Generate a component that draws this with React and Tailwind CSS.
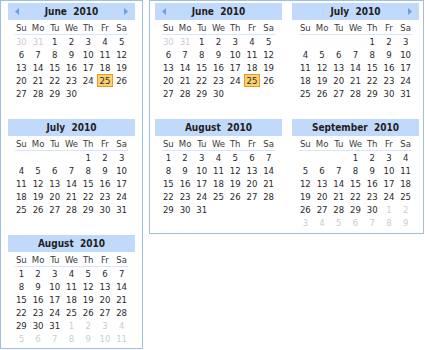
import React from 'react';

const DAY_NAMES = ['Su', 'Mo', 'Tu', 'We', 'Th', 'Fr', 'Sa'];
const MONTHS = ['January', 'February', 'March', 'April', 'May', 'June', 'July', 'August', 'September', 'October', 'November', 'December'];

// builds 6 weeks of cells, each { day, kind }
const buildWeeks = (year, month) => {
  const first = new Date(year, month, 1).getDay();
  const weeks = [];
  for (let w = 0; w < 6; w++) {
    const row = [];
    for (let d = 0; d < 7; d++) {
      const date = new Date(year, month, 1 - first + w * 7 + d);
      let kind = 'in';
      if (date.getMonth() !== month) kind = date < new Date(year, month, 1) ? 'before' : 'after';
      row.push({ day: date.getDate(), kind });
    }
    weeks.push(row);
  }
  return weeks;
};

const Arrow = ({ dir }) => (
  <svg width="4" height="7" viewBox="0 0 4 7" className="block">
    {dir === 'left' ? <polygon points="4,0 4,7 0,3.5" fill="#6a9fdc" /> : <polygon points="0,0 0,7 4,3.5" fill="#6a9fdc" />}
  </svg>
);

const Month = ({ year, month, prev, next, leading, trailing, selected }) => {
  const weeks = buildWeeks(year, month);
  return (
    <div className="w-[127px] mb-[6px] last:mb-0">
      <div className="h-[17px] bg-[#c1d9fa] flex items-center justify-between px-[7px]">
        <div className="w-[4px]">{prev && <Arrow dir="left" />}</div>
        <div className="text-[10px] font-bold text-[#1e1e1e] leading-none whitespace-pre">{MONTHS[month]}{'  '}{year}</div>
        <div className="w-[4px]">{next && <Arrow dir="right" />}</div>
      </div>
      <div className="mx-[5px] pt-[2px]">
        <div className="grid grid-cols-7 h-[12px] items-center">
          {DAY_NAMES.map((n) => (
            <div key={n} className="text-center text-[9.5px] leading-none text-[#3a3a3a]">{n}</div>
          ))}
        </div>
        <div className="mx-[2px] h-px bg-[#d6e5f9]" />
        {weeks.map((row, i) => (
          <div key={i} className="grid grid-cols-7 h-[13px]">
            {row.map((c, j) => {
              const show = c.kind === 'in' || (c.kind === 'before' && leading) || (c.kind === 'after' && trailing);
              if (!show) return <div key={j} />;
              const isSel = c.kind === 'in' && c.day === selected;
              return (
                <div key={j} className="flex items-center justify-center">
                  <div
                    className={
                      isSel
                        ? 'w-[16px] h-[13px] flex items-center justify-center bg-[#fcd06a] border border-[#e39b2c] text-[9.5px] leading-none text-[#2a2a2a]'
                        : c.kind === 'in'
                        ? 'text-[9.5px] leading-none text-[#2a2a2a]'
                        : 'text-[9.5px] leading-none text-[#cdcdcd]'
                    }
                  >
                    {c.day}
                  </div>
                </div>
              );
            })}
          </div>
        ))}
      </div>
    </div>
  );
};

export default function App() {
  return (
    <div
      className="w-[425px] h-[350px] bg-white flex items-start gap-[6px]"
      style={{ fontFamily: '"DejaVu Sans Condensed", "Liberation Sans Narrow", "Open Sans", sans-serif' }}
    >
      <div className="w-[143px] h-[349px] border border-[#9fbde6] pt-[2px] pl-[7px] flex flex-col">
        <Month year={2010} month={5} prev next leading selected={25} />
        <Month year={2010} month={6} />
        <Month year={2010} month={7} trailing />
      </div>
      <div className="w-[275px] h-[234px] border border-[#9fbde6] pt-[2px] pl-[5px] grid grid-cols-[127px_127px] gap-x-[10px] content-start">
        <Month year={2010} month={5} prev leading selected={25} />
        <Month year={2010} month={6} next />
        <Month year={2010} month={7} />
        <Month year={2010} month={8} trailing />
      </div>
    </div>
  );
}
